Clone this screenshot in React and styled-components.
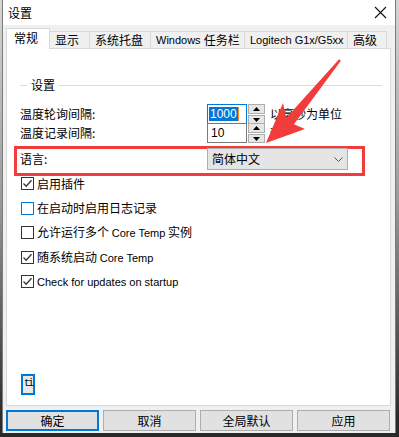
import React from "react"
import styled, { createGlobalStyle } from "styled-components"

const GlobalStyle = createGlobalStyle`
html, body {
    margin: 0;
    padding: 0;
    background: linear-gradient(#d6d6d6 0, #9a9a9a 200px, #2a2a2a 420px);
    height: 437px;
    overflow: hidden;
}
body {
    font-family: "Noto Sans CJK SC", "Noto Sans", sans-serif;
    font-size: 12px;
    color: #000;
}
`

const Stage = styled.div`
position: relative;
width: 399px;
height: 437px;
`

const Window = styled.div`
margin-left: 2px;
width: 392px;
height: 433px;
border-left: 1px solid #7c7c7c;
border-right: 1px solid #7c7c7c;
background: #f0f0f0;
display: flex;
flex-direction: column;
`

const TitleBar = styled.div`
height: 25px;
background: #fff;
display: flex;
align-items: center;
justify-content: space-between;
padding: 0 8px 0 5px;

span {
    font-size: 12px;
    line-height: 14px;
}
`

const Body = styled.div`
flex: 1;
display: flex;
flex-direction: column;
padding: 3px 0 0 3px;
`

const TabBar = styled.div`
display: flex;
align-items: flex-end;
height: 21px;
margin-bottom: -1px;
`

const Tab = styled.div`
box-sizing: border-box;
width: ${p => p.w}px;
height: ${p => (p.active ? 21 : 17)}px;
margin-bottom: ${p => (p.active ? 0 : 1)}px;
padding: 0 0 ${p => (p.active ? 3 : 0)}px ${p => (p.active ? 7 : 5)}px;
border: 1px solid #d9d9d9;
border-bottom: none;
border-left-width: ${p => (p.first || p.active ? 1 : 0)}px;
background: ${p => (p.active ? "#fff" : "#f0f0f0")};
position: relative;
z-index: ${p => (p.active ? 2 : 1)};
display: flex;
align-items: center;
gap: 3px;
white-space: nowrap;
font-size: 12px;
line-height: 14px;
`

const Panel = styled.div`
box-sizing: border-box;
width: 385px;
height: 358px;
background: #fff;
border: 1px solid #d9d9d9;
padding: 29px 8px 10px 13px;
display: flex;
flex-direction: column;
`

const GroupHeader = styled.div`
display: flex;
align-items: center;
height: 14px;
gap: 2px;

&::before {
    content: "";
    width: 7px;
    border-top: 1px solid #dcdcdc;
}
&::after {
    content: "";
    flex: 1;
    border-top: 1px solid #dcdcdc;
}
span {
    line-height: 14px;
    padding: 0 2px;
}
`

const FieldRow = styled.div`
display: flex;
align-items: center;
height: 20px;
margin-top: ${p => p.mt}px;
`

const Label = styled.div`
width: 187px;
line-height: 14px;
`

const NumBox = styled.div`
box-sizing: border-box;
width: 40px;
height: 20px;
border: 1px solid ${p => (p.focus ? "#0078d7" : "#7a7a7a")};
display: flex;
align-items: center;
padding-left: ${p => (p.focus ? 1 : 3)}px;
font-family: "Liberation Sans", sans-serif;
font-size: 12px;
`

const Selected = styled.span`
background: #0078d7;
color: #fff;
padding: 0 1px;
line-height: 14px;
`

const Caret = styled.span`
width: 1px;
height: 14px;
background: #f08a24;
`

const Spin = styled.div`
display: flex;
flex-direction: column;
margin-left: 1px;
gap: 1px;
`

const SpinBtn = styled.div`
box-sizing: border-box;
width: 17px;
height: ${p => (p.top ? 10 : 9)}px;
background: #e6e6e6;
border: 1px solid #adadad;
display: flex;
align-items: center;
justify-content: center;
`

const Unit = styled.span`
margin-left: 5px;
line-height: 14px;
`

const LangRow = styled.div`
display: flex;
align-items: flex-start;
width: 342px;
height: 24px;
margin: 3px 0 0 -6px;
padding-left: 3px;
border: 3px solid #f23b3b;
`

const LangLabel = styled.div`
width: 187px;
line-height: 14px;
padding-top: 3px;
`

const Select = styled.div`
box-sizing: border-box;
width: 141px;
height: 22px;
margin-top: -1px;
background: #e5e5e5;
border: 1px solid #adadad;
display: flex;
align-items: center;
justify-content: space-between;
padding: 0 4px 0 4px;
line-height: 14px;
`

const CheckList = styled.div`
display: flex;
flex-direction: column;
gap: 11.5px;
padding-top: 1px;
`

const CheckRow = styled.label`
display: flex;
align-items: center;
height: 13px;
margin-left: 1px;
gap: 3px;
line-height: 14px;
white-space: nowrap;
`

const Box = styled.span`
box-sizing: border-box;
width: 13px;
height: 13px;
border: 1px solid ${p => (p.focus ? "#0078d7" : "#333")};
background: #fff;
display: flex;
align-items: center;
justify-content: center;
`

const Latin = styled.span`
font-family: "Liberation Sans", sans-serif;
font-size: 11px;
`

const Stray = styled.div`
margin-top: auto;
margin-left: 1px;
box-sizing: border-box;
width: 14px;
height: 21px;
border: 2px solid #0078d7;
background: #e8e8e8;
font-size: 10px;
line-height: 15px;
text-align: center;
font-family: "Liberation Mono", monospace;
letter-spacing: -2px;
`

const ButtonBar = styled.div`
display: flex;
gap: 4px;
margin-top: 4px;
`

const Button = styled.div`
box-sizing: border-box;
width: 93px;
height: 21px;
background: #e1e1e1;
border: ${p => (p.primary ? "2px solid #0078d7" : "1px solid #adadad")};
display: flex;
align-items: center;
justify-content: center;
font-size: 12px;
line-height: 14px;
`

const Annotation = styled.svg`
position: absolute;
left: 0;
top: 0;
pointer-events: none;
`

const Check = () => (
    <svg width="11" height="11" viewBox="0 0 11 11">
        <path d="M1.5 5.5 L4.2 8.2 L9.5 2.2" fill="none" stroke="#333" strokeWidth="1.3" />
    </svg>
)

const Tri = ({ up }) => (
    <svg width="7" height="4" viewBox="0 0 7 4">
        <path d={up ? "M0 4 L3.5 0 L7 4 Z" : "M0 0 L7 0 L3.5 4 Z"} fill="#000" />
    </svg>
)

const tabs = [
    { t: <>常规</>, w: 44 },
    { t: <>显示</>, w: 40 },
    { t: <>系统托盘</>, w: 61 },
    { t: <><Latin>Windows</Latin>任务栏</>, w: 94 },
    { t: <Latin>Logitech G1x/G5xx</Latin>, w: 103 },
    { t: <>高级</>, w: 39 },
]

const checks = [
    { on: true, label: <>启用插件</> },
    { on: false, focus: true, label: <>在启动时启用日志记录</> },
    { on: false, label: <>允许运行多个 <Latin>Core Temp</Latin> 实例</> },
    { on: true, label: <>随系统启动 <Latin>Core Temp</Latin></> },
    { on: true, label: <Latin>Check for updates on startup</Latin> },
]

const App = () => {
    return (
        <Stage>
            <GlobalStyle />
            <Window>
                <TitleBar>
                    <span>设置</span>
                    <svg width="13" height="13" viewBox="0 0 13 13">
                        <path d="M1 1 L12 12 M12 1 L1 12" stroke="#111" strokeWidth="1.1" />
                    </svg>
                </TitleBar>
                <Body>
                    <TabBar>
                        {tabs.map((tab, i) => (
                            <Tab key={i} w={tab.w} active={i === 0} first={i === 0}>
                                {tab.t}
                            </Tab>
                        ))}
                    </TabBar>
                    <Panel>
                        <GroupHeader><span>设置</span></GroupHeader>
                        <FieldRow mt={12}>
                            <Label>温度轮询间隔:</Label>
                            <NumBox focus>
                                <Selected>1000</Selected>
                                <Caret />
                            </NumBox>
                            <Spin>
                                <SpinBtn top><Tri up /></SpinBtn>
                                <SpinBtn><Tri /></SpinBtn>
                            </Spin>
                            <Unit>以毫秒为单位</Unit>
                        </FieldRow>
                        <FieldRow mt={-1}>
                            <Label>温度记录间隔:</Label>
                            <NumBox>10</NumBox>
                            <Spin>
                                <SpinBtn top><Tri up /></SpinBtn>
                                <SpinBtn><Tri /></SpinBtn>
                            </Spin>
                            <Unit>秒</Unit>
                        </FieldRow>
                        <LangRow>
                            <LangLabel>语言:</LangLabel>
                            <Select>
                                <span>简体中文</span>
                                <svg width="9" height="5" viewBox="0 0 9 5">
                                    <path d="M0.5 0.5 L4.5 4.5 L8.5 0.5" fill="none" stroke="#555" strokeWidth="1" />
                                </svg>
                            </Select>
                        </LangRow>
                        <CheckList>
                            {checks.map((c, i) => (
                                <CheckRow key={i}>
                                    <Box focus={c.focus}>{c.on && <Check />}</Box>
                                    <span>{c.label}</span>
                                </CheckRow>
                            ))}
                        </CheckList>
                        <Stray>ti</Stray>
                    </Panel>
                    <ButtonBar>
                        <Button primary>确定</Button>
                        <Button>取消</Button>
                        <Button>全局默认</Button>
                        <Button>应用</Button>
                    </ButtonBar>
                </Body>
            </Window>
            <Annotation width="399" height="437" viewBox="0 0 399 437">
                <polygon
                    points="339.1,59.2 286.1,117.9 283,103 266,143 305,129 293.9,124.2 340.9,60.8"
                    fill="#f23c3c"
                />
            </Annotation>
        </Stage>
    )
}

export default App
